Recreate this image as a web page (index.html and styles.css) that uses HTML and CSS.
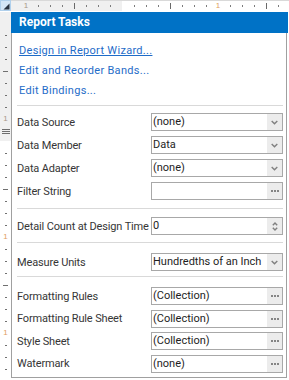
FILE: index.html
```html
<!DOCTYPE html>
<html>
<head>
<meta charset="utf-8">
<link rel="stylesheet" href="styles.css">
</head>
<body>
<div class="screen">
  <div class="toprow">
    <div class="corner">
      <svg width="11" height="11" viewBox="0 0 11 11"><rect x="0.5" y="0.5" width="10" height="10" fill="#d4e6f7" stroke="#b0d0ec"/><path d="M9.5 3.5 V9.5 H3.5 Z" fill="#2a3442"/></svg>
    </div>
    <div class="hruler">
      <span class="c"><i class="num">1</i></span>
      <span class="c"><b class="t"></b></span>
      <span class="c"><b class="t"></b></span>
      <span class="c"><b class="t"></b></span>
      <span class="c"><b class="t l"></b></span>
      <span class="c"><b class="t"></b></span>
      <span class="c"><b class="t"></b></span>
      <span class="c"><b class="t"></b></span>
      <span class="c"></span>
      <span class="c"><b class="t"></b></span>
      <span class="c"><b class="t"></b></span>
      <span class="c"><b class="t"></b></span>
      <span class="c"><b class="t l"></b></span>
      <span class="c"><b class="t"></b></span>
      <span class="c"><b class="t"></b></span>
      <span class="c"><b class="t"></b></span>
      <span class="c"><i class="num cur">1</i></span>
      <span class="c"><b class="t"></b></span>
      <span class="c"><b class="t"></b></span>
      <span class="c"><b class="t"></b></span>
      <span class="c"><b class="t l"></b></span>
      <span class="c"><b class="t"></b></span>
    </div>
  </div>
  <div class="mainrow">
    <div class="vruler">
      <div class="vseg vseg1">
        <span class="v"><b class="h"></b></span>
        <span class="v"><b class="h"></b></span>
        <span class="v"><b class="h"></b></span>
        <span class="v"><b class="h l"></b></span>
        <span class="v"><b class="h"></b></span>
        <span class="v"><b class="h"></b></span>
        <span class="v"><b class="h"></b></span>
        <span class="v"><i class="num">1</i></span>
        <span class="v"><svg width="8" height="5" viewBox="0 0 8 5"><path d="M0 0.5H8M0 2.5H8M0 4.5H8" stroke="#6e6e6e" stroke-width="1"/></svg></span>
      </div>
      <div class="vseg vseg2">
        <span class="v"><b class="h"></b></span>
        <span class="v"><b class="h"></b></span>
        <span class="v"><b class="h"></b></span>
        <span class="v"><b class="h l"></b></span>
        <span class="v"><b class="h"></b></span>
        <span class="v"><b class="h"></b></span>
        <span class="v"><b class="h"></b></span>
        <span class="v"><i class="num cur">1</i></span>
        <span class="v"><b class="h"></b></span>
        <span class="v"><b class="h"></b></span>
        <span class="v"><b class="h"></b></span>
        <span class="v"><b class="h l"></b></span>
        <span class="v"><b class="h"></b></span>
        <span class="v"><b class="h"></b></span>
        <span class="v"><b class="h"></b></span>
        <span class="v"><i class="num cur">1</i></span>
        <span class="v"><b class="h"></b></span>
        <span class="v"><b class="h"></b></span>
        <span class="v"><b class="h"></b></span>
      </div>
    </div>

    <div class="panel">
      <div class="ph">Report Tasks</div>
      <div class="pb">
        <div class="links">
          <a class="link hover" href="#">Design in Report Wizard...</a>
          <a class="link" href="#">Edit and Reorder Bands...</a>
          <a class="link" href="#">Edit Bindings...</a>
        </div>
        <div class="sep"></div>
        <div class="sec s1">
          <div class="row"><span class="lbl">Data Source</span><div class="box"><span class="val">(none)</span><span class="btn"><svg class="chev" width="7" height="5" viewBox="0 0 7 5"><path d="M0.7 0.9 L3.5 3.7 L6.3 0.9" /></svg></span></div></div>
          <div class="row"><span class="lbl">Data Member</span><div class="box"><span class="val">Data</span><span class="btn"><svg class="chev" width="7" height="5" viewBox="0 0 7 5"><path d="M0.7 0.9 L3.5 3.7 L6.3 0.9" /></svg></span></div></div>
          <div class="row"><span class="lbl">Data Adapter</span><div class="box"><span class="val">(none)</span><span class="btn"><svg class="chev" width="7" height="5" viewBox="0 0 7 5"><path d="M0.7 0.9 L3.5 3.7 L6.3 0.9" /></svg></span></div></div>
          <div class="row"><span class="lbl">Filter String</span><div class="box"><span class="val"></span><span class="btn"><svg class="dots" width="8" height="2" viewBox="0 0 8 2"><rect x="0" y="0" width="2" height="2"/><rect x="3" y="0" width="2" height="2"/><rect x="6" y="0" width="2" height="2"/></svg></span></div></div>
        </div>
        <div class="sep"></div>
        <div class="sec s2">
          <div class="row"><span class="lbl">Detail Count at Design Time</span><div class="box"><span class="val">0</span><span class="btn spin"><svg class="chev" width="6" height="4" viewBox="0 0 6 4"><path d="M0.8 3.2 L3 1 L5.2 3.2" /></svg><svg class="chev" width="6" height="4" viewBox="0 0 6 4"><path d="M0.8 0.8 L3 3 L5.2 0.8" /></svg></span></div></div>
        </div>
        <div class="sep"></div>
        <div class="sec s3">
          <div class="row"><span class="lbl">Measure Units</span><div class="box"><span class="val">Hundredths of an Inch</span><span class="btn"><svg class="chev" width="7" height="5" viewBox="0 0 7 5"><path d="M0.7 0.9 L3.5 3.7 L6.3 0.9" /></svg></span></div></div>
        </div>
        <div class="sep"></div>
        <div class="sec s4">
          <div class="row"><span class="lbl">Formatting Rules</span><div class="box"><span class="val">(Collection)</span><span class="btn"><svg class="dots" width="8" height="2" viewBox="0 0 8 2"><rect x="0" y="0" width="2" height="2"/><rect x="3" y="0" width="2" height="2"/><rect x="6" y="0" width="2" height="2"/></svg></span></div></div>
          <div class="row"><span class="lbl">Formatting Rule Sheet</span><div class="box"><span class="val">(Collection)</span><span class="btn"><svg class="dots" width="8" height="2" viewBox="0 0 8 2"><rect x="0" y="0" width="2" height="2"/><rect x="3" y="0" width="2" height="2"/><rect x="6" y="0" width="2" height="2"/></svg></span></div></div>
          <div class="row"><span class="lbl">Style Sheet</span><div class="box"><span class="val">(Collection)</span><span class="btn"><svg class="dots" width="8" height="2" viewBox="0 0 8 2"><rect x="0" y="0" width="2" height="2"/><rect x="3" y="0" width="2" height="2"/><rect x="6" y="0" width="2" height="2"/></svg></span></div></div>
          <div class="row"><span class="lbl">Watermark</span><div class="box"><span class="val">(none)</span><span class="btn"><svg class="dots" width="8" height="2" viewBox="0 0 8 2"><rect x="0" y="0" width="2" height="2"/><rect x="3" y="0" width="2" height="2"/><rect x="6" y="0" width="2" height="2"/></svg></span></div></div>
        </div>
      </div>
    </div>
  </div>
</div>
</body>
</html>
```

FILE: styles.css
```css
* { box-sizing: border-box; }
html, body { margin: 0; padding: 0; }
body {
  width: 289px;
  height: 380px;
  overflow: hidden;
  background: #fff;
  font-family: Roboto, "Liberation Sans", sans-serif;
  font-size: 11px;
  color: #333;
}
.screen { width: 289px; height: 380px; }

/* top ruler */
.toprow { display: flex; height: 12px; }
.corner { width: 11px; height: 11px; flex: none; }
.corner svg { display: block; }
.hruler {
  flex: 1;
  height: 11px;
  border-top: 1px solid #d9d9d9;
  background: linear-gradient(to right, #f0f0f0 0 111px, #fff 111px);
  display: flex;
  padding-left: 9px;
  overflow: hidden;
}
.hruler .c {
  flex: none;
  width: 12px;
  height: 10px;
  display: flex;
  align-items: center;
  justify-content: center;
}
.t { display: block; width: 1px; height: 2px; background: #7c7c7c; }
.t.l { height: 6px; background: #6a6a6a; }
.num {
  font-style: normal;
  font-family: "Liberation Sans", sans-serif;
  font-size: 8px;
  line-height: 8px;
  color: #a89888;
}
.num.cur { color: #e0a060; }

/* left ruler */
.mainrow { display: flex; height: 368px; }
.vruler { width: 11px; flex: none; display: flex; flex-direction: column; }
.vseg { display: flex; flex-direction: column; }
.vseg1 { background: #f0f0f0; padding-top: 17px; height: 129px; }
.vseg2 { padding-top: 6px; }
.v {
  height: 12px;
  flex: none;
  display: flex;
  align-items: center;
  justify-content: center;
}
.v svg { display: block; }
.h { display: block; width: 2px; height: 1px; background: #707070; }
.h.l { width: 5px; }

/* panel */
.panel { width: 277px; flex: none; display: flex; flex-direction: column; }
.ph {
  height: 21px;
  background: #0072c6;
  color: #fff;
  font-weight: bold;
  font-size: 12px;
  line-height: 21px;
  padding-left: 8px;
}
.pb {
  margin-right: 1px;
  border: 1px solid #a0a0a0;
  border-top: none;
  padding: 0 3px 0 5px;
  background: #fff;
}
.links { padding: 8px 0 4px 2px; }
.link {
  display: block;
  line-height: 20px;
  color: #1f6cc8;
  text-decoration: none;
  white-space: nowrap;
  letter-spacing: 0.3px;
}
.link.hover { text-decoration: underline; }
.sep { height: 1px; background: #d9d9d9; }

.sec { display: flex; flex-direction: column; gap: 5px; }
.s1 { padding: 7px 0 8px; }
.s2 { padding: 8px 0 7px; }
.s3 { padding: 10px 0 5px; }
.s4 { padding: 10px 0 4.5px; gap: 4.5px; }

.row { display: flex; align-items: center; height: 18px; }
.lbl { flex: 1; white-space: nowrap; color: #363636; letter-spacing: -0.15px; }
.box {
  flex: none;
  width: 132px;
  height: 18px;
  border: 1px solid #a8a8a8;
  display: flex;
  background: #fff;
}
.val {
  flex: 1;
  padding-left: 1px;
  line-height: 16px;
  color: #1e1e1e;
  white-space: nowrap;
  overflow: hidden;
}
.btn {
  width: 15px;
  flex: none;
  background: #ececec;
  display: flex;
  align-items: center;
  justify-content: center;
}
.btn.spin { flex-direction: column; gap: 1px; }
.chev { display: block; }
.chev path { fill: none; stroke: #808080; stroke-width: 1.4; }
.dots { display: block; fill: #858585; }
```
